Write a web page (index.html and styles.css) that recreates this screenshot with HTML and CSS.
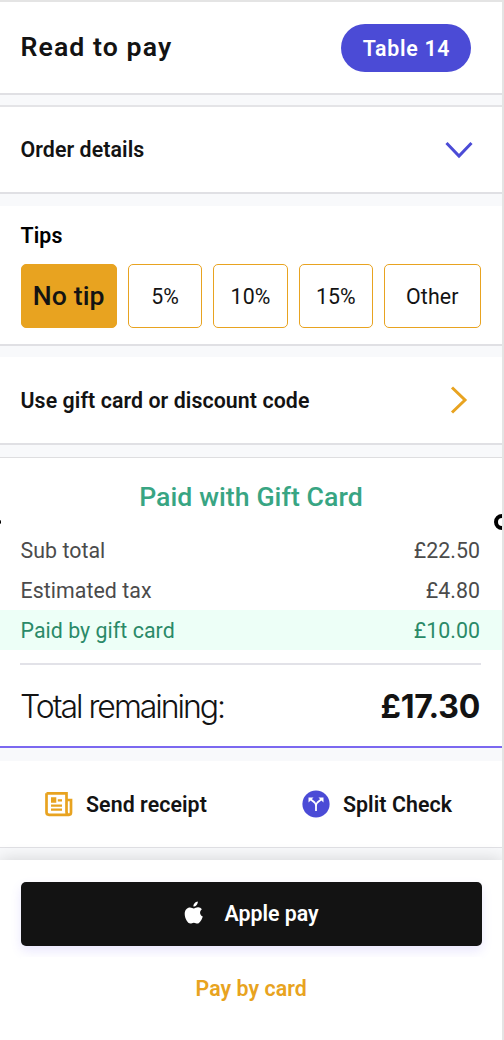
FILE: index.html
```html
<!DOCTYPE html>
<html lang="en">
<head>
<meta charset="utf-8">
<title>Read to pay</title>
<link rel="stylesheet" href="styles.css">
</head>
<body>
<main class="screen">
  <header class="panel header">
    <h1 class="title">Read to pay</h1>
    <span class="table-badge">Table 14</span>
  </header>
  <section class="panel order">
    <h2 class="label">Order details</h2>
    <svg class="chevron-down" width="28" height="18" viewBox="0 0 28 18"><path d="M1.5 2 14 15 26.5 2"/></svg>
  </section>
  <section class="panel tips">
    <h2 class="label tips-label">Tips</h2>
    <div class="tip-options">
      <button class="tip tip-selected">No tip</button>
      <button class="tip">5%</button>
      <button class="tip">10%</button>
      <button class="tip">15%</button>
      <button class="tip">Other</button>
    </div>
  </section>
  <section class="panel gift">
    <h2 class="label">Use gift card or discount code</h2>
    <svg class="chevron-right" width="18" height="28" viewBox="0 0 18 28"><path d="M2 1.5 15 14 2 26.5"/></svg>
  </section>
  <section class="panel summary">
    <h2 class="paid-title">Paid with Gift Card</h2>
    <div class="row"><span>Sub total</span><span>£22.50</span></div>
    <div class="row"><span>Estimated tax</span><span>£4.80</span></div>
    <div class="row row-paid"><span>Paid by gift card</span><span>£10.00</span></div>
    <div class="total"><span class="total-label">Total remaining:</span><span class="total-value">£17.30</span></div>
    <i class="mark mark-left"></i>
    <i class="mark mark-right"></i>
  </section>
  <section class="panel actions">
    <button class="action">
      <svg width="28" height="26" viewBox="0 0 28 26">
        <path d="M1.5 2.3H21.5V20.8Q21.5 23.8 24 23.8Q26 23.8 26 21.3V9H22M1.5 2.3V21.3Q1.5 23.8 4 23.8H24" fill="none" stroke="#e8a320" stroke-width="2.7"/>
        <path d="M6 6.3h5.3v5.4H6zM12.8 8.2h4.2v2.4h-4.2zM6 13.4h11v2.3H6zM6 17.4h11v2.3H6z" fill="#e8a320"/>
      </svg>
      Send receipt
    </button>
    <button class="action action-split">
      <svg width="28" height="28" viewBox="0 0 28 28">
        <circle cx="14" cy="14" r="13.6" fill="#4b4bd6"/>
        <path d="M14 21V16Q14 14 12.6 12.5L8.2 9M14 16Q14 14 15.4 12.5L19.8 9" fill="none" stroke="#fff" stroke-width="1.8"/>
        <path d="M6.5 7.5h5l-5 5zM21.5 7.5h-5l5 5z" fill="#fff"/>
      </svg>
      Split Check
    </button>
  </section>
  <footer class="panel footer">
    <button class="apple-pay">
      <svg width="20" height="24" viewBox="0 0 20 24"><path fill="#fff" d="M13.8 .5C14 3 12 5.6 9.4 5.6C9.2 3 11.3 .9 13.8 .5ZM17.9 8.2C15.3 9.8 15.4 14.2 18.8 15.5C18 18.2 15.8 22.6 13.4 22.6C12.1 22.6 11.5 21.8 9.9 21.8C8.3 21.8 7.6 22.6 6.5 22.6C3.5 22.6 .7 17 .7 13C.7 8.7 3.2 6.4 6 6.4C7.5 6.4 8.8 7.4 9.8 7.4C10.8 7.4 12.4 6.2 14.2 6.3C15.7 6.4 17 7.1 17.9 8.2Z"/></svg>
      <span class="apple-text">Apple pay</span>
    </button>
    <button class="card-pay">Pay by card</button>
  </footer>
</main>
</body>
</html>
```
FILE: styles.css
```css
* { box-sizing: border-box; }
body { margin: 0; background: #e4e4e4; color: #131313; font-family: Roboto, sans-serif; font-size: 21.33px; }
button { margin: 0; padding: 0; border: 0; background: none; color: inherit; font: inherit; }
h1, h2 { margin: 0; }
svg { display: block; flex: none; }
.screen { width: 502px; height: 1040px; border-top: 2px solid #e4e4e4; background: #f8f9fb; display: flex; flex-direction: column; overflow: hidden; }
.panel { flex: none; background: #fff; border-bottom: 2px solid #e0e0e4; }
.header { height: 93px; padding: 0 31px 0 20.5px; display: flex; align-items: center; justify-content: space-between; }
.title { margin-bottom: 1px; font-size: 26.67px; font-weight: 600; letter-spacing: 1.07px; line-height: 32px; }
.table-badge { width: 130px; height: 48px; margin-top: 1px; padding-left: 1px; border-radius: 24px; background: #4b4bd6; color: #fff; font-weight: 600; letter-spacing: .72px; line-height: 49px; text-align: center; }
.order { height: 89px; margin-top: 10px; padding: 0 29px 0 20.5px; border-top: 2px solid #e4e4e7; display: flex; align-items: center; justify-content: space-between; }
.label { font-size: 21.33px; line-height: 28px; font-weight: 600; letter-spacing: .08px; }
.chevron-down, .chevron-right { fill: none; stroke: #4b4bd6; stroke-width: 3; }
.chevron-right { stroke: #e8a320; margin-right: 5px; }
.tips { height: 140px; margin-top: 12px; padding: 16px 21.5px 0 20.5px; }
.tips-label { color: #000; }
.tip-options { display: grid; grid-template-columns: 96.5px 74.5px 74.5px 74.5px 96.5px; justify-content: space-between; margin-top: 14px; }
.tip { height: 64px; border: 1.33px solid #e8a320; border-radius: 5px; letter-spacing: .1px; }
.tip-selected { background: #e8a320; font-size: 26.67px; font-weight: 500; }
.gift { height: 88px; margin-top: 11px; padding: 1px 29px 0 20.5px; display: flex; align-items: center; justify-content: space-between; }
.gift .chevron-right { margin-bottom: 1px; }
.summary { position: relative; height: 291px; margin-top: 12px; padding-top: 22px; border-top: 1px solid #dedee0; border-bottom-color: #7b68f0; }
.paid-title { margin-bottom: 16px; font-size: 26.67px; line-height: 34px; font-weight: 500; letter-spacing: .07px; color: #38a583; text-align: center; }
.row { display: flex; justify-content: space-between; align-items: center; height: 40px; padding: 0 22px 0 20.5px; letter-spacing: .05px; color: #4b4b4b; }
.row-paid { background: #edfff7; color: #2a8a68; }
.total { display: flex; justify-content: space-between; align-items: center; height: 84px; margin: 13px 21px 0 20px; border-top: 2px solid #e2e2e8; font-family: Inter, sans-serif; font-size: 32px; }
.total-label { font-weight: 300; letter-spacing: -2.03px; }
.total-value { padding-right: 1px; font-weight: 700; letter-spacing: -.25px; }
.mark { position: absolute; }
.mark-left { left: -2px; top: 62px; width: 3px; height: 4px; border-radius: 2px; background: #000; }
.mark-right { left: 494px; top: 56px; width: 16px; height: 16px; border: 4px solid #000; border-radius: 50%; }
.actions { display: flex; height: 87px; margin-top: 13px; padding-left: 45px; border-bottom-width: 1px; }
.action { display: flex; align-items: center; gap: 13px; font-weight: 600; letter-spacing: .08px; }
.action-split { margin-left: 95px; }
.footer { height: 180px; margin-top: 12px; padding: 22px 20px 0 20.5px; border: 0; box-shadow: 0 0 16px rgba(0,0,0,.16); display: flex; flex-direction: column; }
.apple-pay { height: 64px; flex: none; display: flex; align-items: center; justify-content: center; gap: 20.5px; border-radius: 5px; background: #131313; color: #fff; font-weight: 600; box-shadow: 0 5px 11px rgba(108,84,245,.14); }
.apple-text { padding-bottom: 2px; }
.apple-pay svg { margin-bottom: 3px; }
.card-pay { position: relative; height: 56px; margin-top: 11px; background: #fff; color: #e8a320; font-weight: 600; letter-spacing: .06px; line-height: 64px; }
```
